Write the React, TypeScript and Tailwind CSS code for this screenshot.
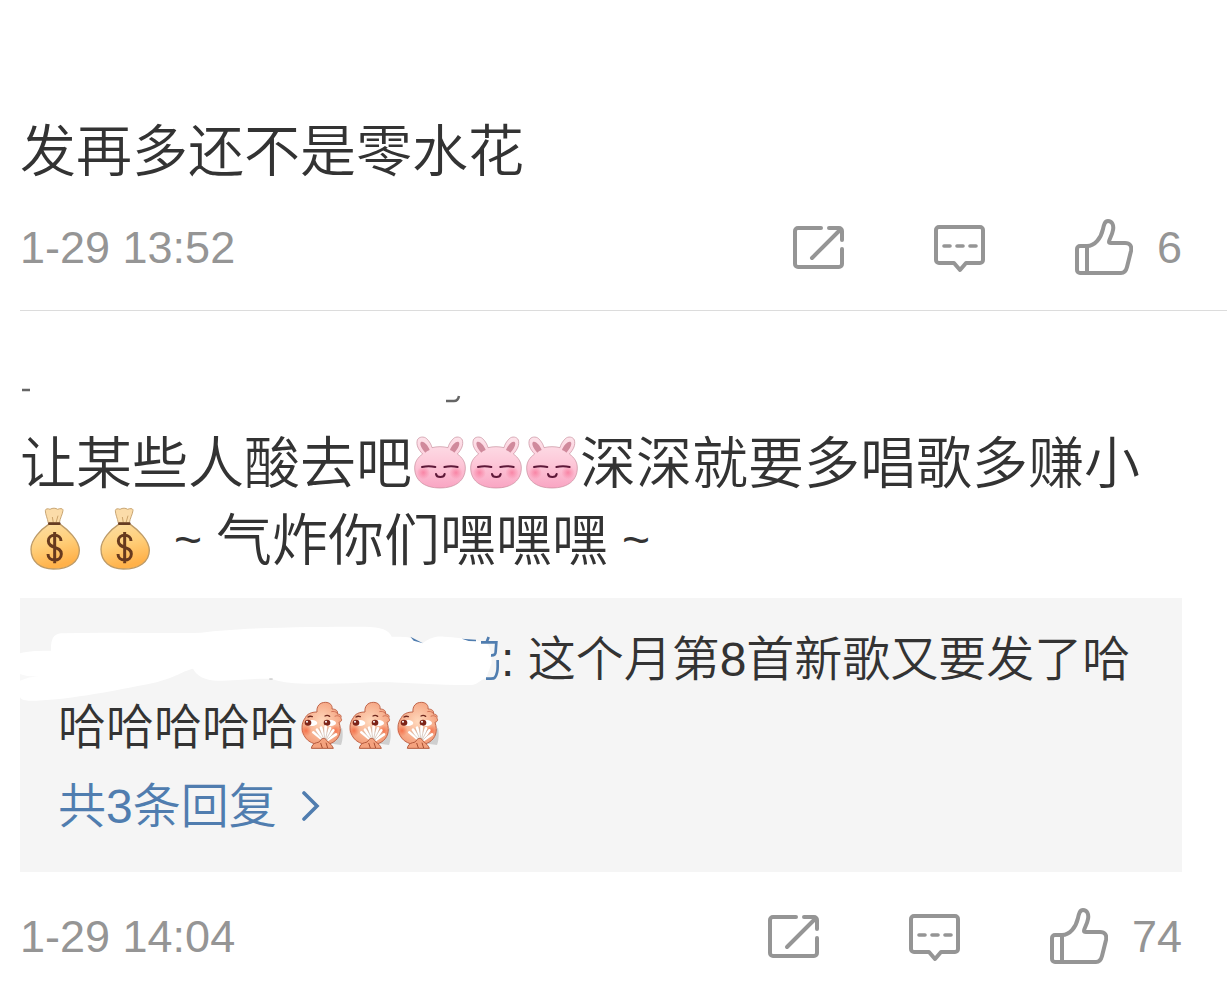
const ShareIcon = () => (
  <svg
    className="w-[52px] h-[54px]"
    viewBox="0 0 52 54"
    fill="none"
    stroke="#959595"
    strokeWidth="4"
    strokeLinecap="round"
    strokeLinejoin="round"
  >
    <path d="M28 7H5a3 3 0 0 0-3 3v33a3 3 0 0 0 3 3h41a3 3 0 0 0 3-3V28" />
    <path d="M36 7h10a3 3 0 0 1 3 3v9" />
    <path d="M19 37 47 9" />
  </svg>
);

const CommentIcon = () => (
  <svg
    className="w-[52px] h-[54px]"
    viewBox="0 0 52 54"
    fill="none"
    stroke="#959595"
    strokeWidth="4"
    strokeLinecap="round"
    strokeLinejoin="round"
  >
    <path d="M5 6h41a3 3 0 0 1 3 3v30a3 3 0 0 1-3 3H32l-6 7-6-7H5a3 3 0 0 1-3-3V9a3 3 0 0 1 3-3Z" />
    <path d="M10 25h6M23 25h6M36 25h6" strokeWidth="3.6" />
  </svg>
);

const LikeIcon = () => (
  <svg
    className="w-[58px] h-[58px]"
    viewBox="0 0 58 58"
    fill="none"
    stroke="#959595"
    strokeWidth="4"
    strokeLinecap="round"
    strokeLinejoin="round"
  >
    <path d="M12 27c8 0 14-8 16-17 1-5 2-8 5-8 4 0 6 4 5 9-1 6-4 9-4 12 0 1 1 1 2 1h14c5 0 7 3 6 8l-4 16c-1 4-3 6-6 6H5a3 3 0 0 1-3-3V30a3 3 0 0 1 3-3Z" />
    <path d="M12 27v27" />
  </svg>
);

const Rabbit = () => (
  <svg
    className="inline-block w-[52px] h-[54px] mx-[2px] align-[-7px]"
    viewBox="42 50 156 162"
  >
    <defs>
      <linearGradient id="rabbitSkin" x1="0" y1="0" x2="0" y2="1">
        <stop offset="0" stopColor="#fde3ea" />
        <stop offset="0.5" stopColor="#fdc9d9" />
        <stop offset="1" stopColor="#f9a5c3" />
      </linearGradient>
      <radialGradient id="rabbitCheek">
        <stop offset="0" stopColor="#f8789b" stopOpacity="0.8" />
        <stop offset="1" stopColor="#f8789b" stopOpacity="0" />
      </radialGradient>
    </defs>
    <path
      d="M68 104C54 90 48 76 52 62c4-10 20-12 28-4 9 9 14 18 16 27 16-4 32-4 48 0 2-9 7-18 16-27 8-8 23-6 27 4 4 14-2 28-15 42 16 11 24 25 24 42 0 35-26 60-76 60S44 181 44 146c0-17 8-31 24-42Z"
      fill="url(#rabbitSkin)"
      stroke="#c58b9a"
      strokeWidth="2"
    />
    <path
      d="M63 68c9-4 22 12 26 24-4 2-9 4-13 8-10-10-19-27-13-32ZM176 68c-9-4-22 12-26 24 4 2 9 4 13 8 10-10 19-27 13-32Z"
      fill="#d08a9c"
    />
    <circle cx="70" cy="160" r="20" fill="url(#rabbitCheek)" />
    <circle cx="168" cy="160" r="20" fill="url(#rabbitCheek)" />
    <path
      d="M66 143q20-5 40 0M133 143q20-5 40 0"
      fill="none"
      stroke="#5d1838"
      strokeWidth="6"
      strokeLinecap="round"
    />
    <path
      d="M108 164c2 12 24 12 26 0"
      fill="none"
      stroke="#5d1838"
      strokeWidth="6"
      strokeLinecap="round"
    />
  </svg>
);

const MoneyBag = () => (
  <svg
    className="inline-block w-[52px] h-[64px] mx-[9px] align-[-11px]"
    viewBox="56 36 156 192"
  >
    <defs>
      <linearGradient id="bagFill" x1="0" y1="0" x2="0.3" y2="1">
        <stop offset="0" stopColor="#fbdda5" />
        <stop offset="0.5" stopColor="#ffd07c" />
        <stop offset="1" stopColor="#ffb149" />
      </linearGradient>
    </defs>
    <path
      d="M114 84c-3-15-9-27-9-37 0-6 8-7 14-4 8-5 17-4 23 0 8-4 17-2 16 3-1 11-9 24-11 38Z"
      fill="#fbdca9"
      stroke="#c9a674"
      strokeWidth="3"
    />
    <path d="m126 66 3 17M143 62l-6 21" stroke="#cda46a" strokeWidth="3" fill="none" />
    <path
      d="M115 88c-22 14-53 46-53 75 0 37 27 59 67 59 48 0 78-22 78-56 0-31-36-63-57-78Z"
      fill="url(#bagFill)"
      stroke="#bd9b68"
      strokeWidth="4"
    />
    <path d="M117 86h30" stroke="#653b22" strokeWidth="8" strokeLinecap="round" />
    <path
      d="M133 111v94M152 138c0-11-8-17-19-17s-19 6-19 17c0 24 39 14 39 39 0 12-9 18-20 18-12 0-20-7-20-18"
      fill="none"
      stroke="#67391e"
      strokeWidth="9"
    />
  </svg>
);

const FanFace = () => (
  <svg
    className="inline-block w-[42px] h-[48px] mx-[3px] align-[-5px]"
    viewBox="65 32 126 144"
  >
    <defs>
      <radialGradient id="faceSkin" cx="0.5" cy="0.45" r="0.6">
        <stop offset="0" stopColor="#ffd9bd" />
        <stop offset="1" stopColor="#f39a76" />
      </radialGradient>
      <radialGradient id="faceCheek">
        <stop offset="0" stopColor="#f5673f" stopOpacity="0.8" />
        <stop offset="1" stopColor="#f5673f" stopOpacity="0" />
      </radialGradient>
    </defs>
    <path d="m140 158 48-46c4 18 2 38-3 52Z" fill="#cfcfcf" />
    <path
      d="M78 82c5-11 18-17 35-17-2-17 8-29 25-29 15 0 22 10 20 20 12 0 19 6 16 15 9 0 14 6 10 12 5 5 3 11-5 13 9 26 2 48-18 60-22 13-65 10-82-13-15-20-14-44-1-61Z"
      fill="url(#faceSkin)"
      stroke="#c0654a"
      strokeWidth="3"
    />
    <path
      d="M156 64c7-2 13 0 17 4M166 78c7-3 12-2 16 1"
      fill="none"
      stroke="#d2745a"
      strokeWidth="3"
    />
    <circle cx="80" cy="121" r="17" fill="url(#faceCheek)" />
    <circle cx="168" cy="121" r="17" fill="url(#faceCheek)" />
    <ellipse cx="98" cy="98" rx="16" ry="9" fill="#fff" />
    <ellipse cx="154" cy="98" rx="16" ry="9" fill="#fff" />
    <ellipse cx="86" cy="97" rx="10" ry="9" fill="#7d2419" />
    <ellipse cx="143" cy="97" rx="10" ry="9" fill="#7d2419" />
    <circle cx="83" cy="94" r="3" fill="#fff" />
    <circle cx="140" cy="94" r="3" fill="#fff" />
    <path
      d="M86 80q6-4 13-1M137 77q7-4 14 1"
      fill="none"
      stroke="#6e281e"
      strokeWidth="4"
      strokeLinecap="round"
    />
    <path
      d="m137 154-35-28M137 154l-24-36M137 154l-12-42M137 154l2-45M137 154l15-40M137 154l25-34M137 154l33-22"
      stroke="#fff"
      strokeWidth="8"
      strokeLinecap="round"
    />
    <path
      d="m137 154-31-32M137 154l-18-40M137 154l-5-44M137 154l9-42M137 154l20-37M137 154l30-28"
      stroke="#c9b3a6"
      strokeWidth="2"
    />
    <path
      d="M96 174c2-10 7-15 16-17 6-1 9-2 12-8 5-7 14-6 18 1 3 7 14 9 20 24Z"
      fill="#f4a27e"
      stroke="#b4593c"
      strokeWidth="3"
    />
    <path d="M124 158l5 15M140 157l5 16" stroke="#a84f31" strokeWidth="3" />
  </svg>
);

// brushed out user name at the top of the quoted comment
const BrushedName = () => (
  <svg
    className="absolute left-0 top-0 w-[500px] h-[112px]"
    viewBox="27 -36 1500 336"
    aria-hidden="true"
  >
    <path
      d="M27 130C50 122 90 122 120 122 119 92 125 72 150 70 300 65 450 72 570 68 700 52 900 50 1060 50 1110 50 1135 60 1142 80 1165 80 1190 80 1202 84L1235 100C1260 80 1280 78 1300 80 1360 84 1410 92 1425 98 1440 110 1442 140 1442 160L1425 205C1415 205 1400 225 1380 225 1250 225 1150 212 1050 218 950 222 850 225 800 212L780 206C720 205 680 212 620 212 580 212 555 195 546 176 510 185 500 200 430 218 300 245 150 272 60 272 35 272 27 265 27 260Z"
      fill="#fff"
    />
    <path d="M27 192c18 8 38 8 60 6-24 2-42 6-60 14Z" fill="#f8f8f8" />
    <path d="m1198 80 38 20-28-8ZM1352 86l43 3v5l-22-1Z" fill="#507daf" />
    <path
      d="M1410 97h46l-2 28q0 12-14 11M1433 81l-6 15M1460 150v20q0 20-8 32-3 4-12 4h-15"
      fill="none"
      stroke="#507daf"
      strokeWidth="8"
    />
    <path d="M775 207h10" stroke="#999" strokeWidth="2" />
  </svg>
);

type FooterProps = {
  time: string;
  likes: number;
};

const CommentFooter = ({ time, likes }: FooterProps) => (
  <div className="flex items-center justify-between pr-[45px] text-[45px] leading-[60px] text-[#959595]">
    <time>{time}</time>
    <div className="flex items-center gap-[89px]">
      <button type="button" aria-label="转发">
        <ShareIcon />
      </button>
      <button type="button" aria-label="评论">
        <CommentIcon />
      </button>
      <button type="button" aria-label="赞" className="flex items-center gap-6">
        <LikeIcon />
        <span>{likes}</span>
      </button>
    </div>
  </div>
);

const Tilde = () => (
  <span className="inline-block w-14 text-center text-5xl align-[4px]">~</span>
);

const App = () => {
  return (
    <main className="min-h-screen bg-white pl-5 font-['Liberation_Sans','Noto_Sans_CJK_SC',sans-serif] font-[350] text-[#333]">
      <article className="border-b border-[#dcdcdc] pt-[113px] pb-8">
        <p className="text-[56px] leading-[77px]">发再多还不是零水花</p>
        <div className="mt-7">
          <CommentFooter time="1-29 13:52" likes={6} />
        </div>
      </article>

      <article className="pb-5">
        <svg
          className="block w-[480px] h-[114px]"
          viewBox="0 0 480 114"
          fill="none"
          stroke="#666"
          strokeWidth="2.5"
          aria-hidden="true"
        >
          <path d="M2 79h8M426 90h8q4 0 5-5" />
        </svg>
        <p className="pr-10 text-[56px] leading-[77px]">
          让某些人酸去吧
          <Rabbit />
          <Rabbit />
          <Rabbit />
          深深就要多唱歌多赚小
          <MoneyBag />
          <MoneyBag />
          <Tilde />
          气炸你们嘿嘿嘿
          <Tilde />
        </p>
        <div className="relative mt-[19px] mr-[45px] bg-[#f5f5f5] pt-7 pb-8 pl-[38px] pr-10">
          <p className="text-5xl leading-[68px]">
            <span className="inline-block w-[443px]" />: 这个月第8首新歌又要发了哈哈哈哈哈哈
            <FanFace />
            <FanFace />
            <FanFace />
          </p>
          <a
            href="#replies"
            className="mt-3 flex items-center gap-6 text-5xl leading-[66px] text-[#507daf]"
          >
            共3条回复
            <svg
              className="w-5 h-8"
              viewBox="0 0 20 32"
              fill="none"
              stroke="#507daf"
              strokeWidth="3.6"
              strokeLinecap="round"
            >
              <path d="m3 2 13 13L3 28" />
            </svg>
          </a>
          <BrushedName />
        </div>
        <div className="mt-[35px]">
          <CommentFooter time="1-29 14:04" likes={74} />
        </div>
      </article>
    </main>
  );
};

export default App;
